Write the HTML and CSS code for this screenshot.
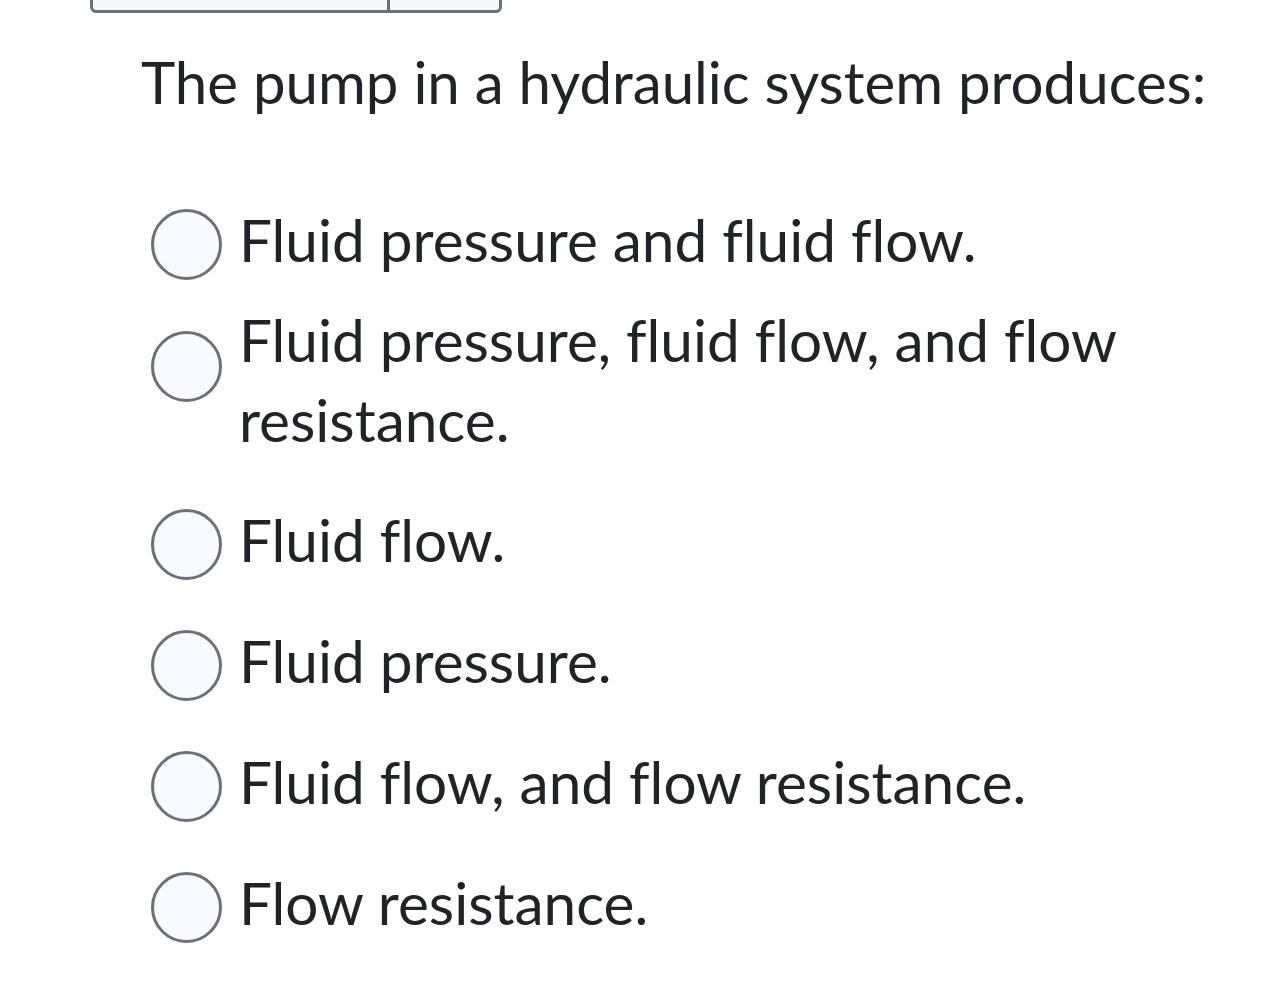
FILE: index.html
```html
<!DOCTYPE html>
<html lang="en">
<head>
<meta charset="utf-8">
<title>Quiz question</title>
<link rel="stylesheet" href="styles.css">
</head>
<body>
  <div class="toolbar">
    <div class="toolbar-cell toolbar-cell--wide"></div>
    <div class="toolbar-cell"></div>
  </div>
  <main class="question">
    <h1 class="question-text">The pump in a hydraulic system produces:</h1>
    <div class="options">
      <label class="option">
        <span class="radio"></span>
        <span class="option-text">Fluid pressure and fluid flow.</span>
      </label>
      <label class="option option--wrap">
        <span class="radio"></span>
        <span class="option-text">Fluid pressure, fluid flow, and flow resistance.</span>
      </label>
      <label class="option">
        <span class="radio"></span>
        <span class="option-text">Fluid flow.</span>
      </label>
      <label class="option">
        <span class="radio"></span>
        <span class="option-text">Fluid pressure.</span>
      </label>
      <label class="option">
        <span class="radio"></span>
        <span class="option-text">Fluid flow, and flow resistance.</span>
      </label>
      <label class="option">
        <span class="radio"></span>
        <span class="option-text">Flow resistance.</span>
      </label>
    </div>
  </main>
</body>
</html>
```

FILE: styles.css
```css
html, body {
  margin: 0;
  padding: 0;
  background: #ffffff;
}

body {
  font-family: Lato, "Open Sans", "Liberation Sans", sans-serif;
  color: #222326;
  font-variant-ligatures: none;
  font-feature-settings: "liga" 0, "clig" 0;
}

.toolbar {
  display: flex;
  width: 412px;
  height: 44px;
  margin: -31px 0 0 90px;
  box-sizing: border-box;
  border: 3px solid #6a7075;
  border-radius: 6px;
  background: #f4f8fa;
}

.toolbar-cell {
  flex: 1;
}

.toolbar-cell--wide {
  flex: 0 0 294px;
  border-right: 3px solid #6a7075;
}

.question {
  padding-left: 141px;
}

.question-text {
  margin: 34px 0 0 0;
  font-size: 58.2px;
  line-height: 70px;
  font-weight: 400;
}

.options {
  display: flex;
  flex-direction: column;
  gap: 40px;
  margin-top: 82px;
  padding-left: 10px;
}

.option {
  display: flex;
  align-items: flex-start;
  gap: 17px;
  font-size: 58.5px;
  line-height: 80px;
}

.option--wrap {
  margin-top: -21px;
}

.radio {
  flex: 0 0 auto;
  width: 71px;
  height: 71px;
  box-sizing: border-box;
  border: 3px solid #6b7176;
  border-radius: 50%;
  background: #f8faff;
  margin-top: 10px;
}

.option--wrap .radio {
  margin-top: 32px;
}

.option-text {
  flex: 1;
}
```
